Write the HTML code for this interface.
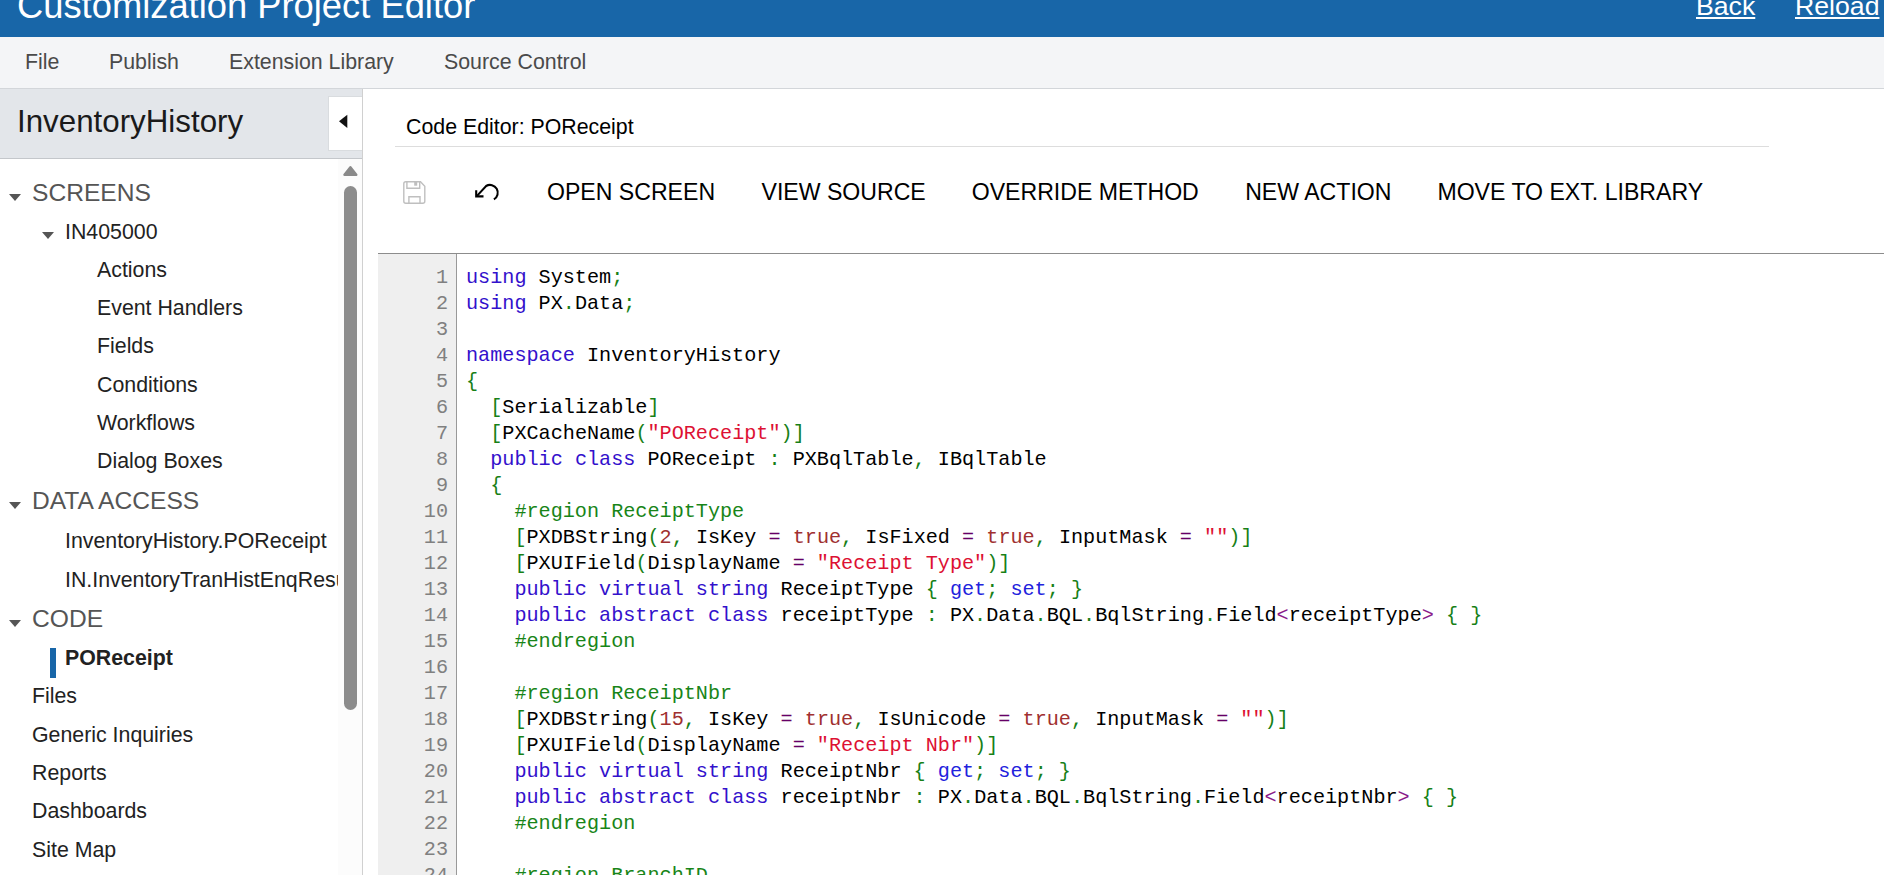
<!DOCTYPE html>
<html><head><meta charset="utf-8">
<style>
html,body{margin:0;padding:0;width:1884px;height:875px;overflow:hidden;background:#fff;font-family:"Liberation Sans",sans-serif;}
.a{position:absolute;white-space:nowrap;line-height:1;}
#hdr{position:absolute;left:0;top:0;width:1884px;height:37px;background:#1866a8;overflow:hidden;}
#menu{position:absolute;left:0;top:37px;width:1884px;height:51px;background:#f4f5f7;border-bottom:1px solid #d3d6da;}
#side{position:absolute;left:0;top:89px;width:362px;height:786px;background:#fff;border-right:1px solid #d0d0d0;overflow:hidden;}
#shead{position:absolute;left:0;top:0;width:362px;height:69px;background:#e3e6ea;border-bottom:1px solid #c4c7cb;}
#tree{position:absolute;left:0;top:0;width:338px;height:786px;overflow:hidden;}
.menu{font-size:21.33px;color:#4a4a4a;}
.grp{font-size:24.6px;color:#555;}
.it{font-size:21.33px;color:#222;}
.b{font-weight:bold;}
.tri{position:absolute;width:0;height:0;border-left:6px solid transparent;border-right:6px solid transparent;border-top:7px solid #555;}
.tb{font-size:23.1px;color:#000;}
#code{position:absolute;left:378px;top:253px;width:1506px;height:622px;border-top:1px solid #8c8c8c;overflow:hidden;}
#gut{position:absolute;left:0;top:0;width:78px;height:630px;background:#efefef;border-right:1px solid #999;}
.mono{font-family:"Liberation Mono",monospace;font-size:20.17px;line-height:26px;}
#nums{position:absolute;right:8px;top:10.5px;color:#808080;text-align:right;white-space:pre;}
pre{margin:0;position:absolute;left:88px;top:10.5px;color:#000;}
.k{color:#3311cc}.g{color:#2222dd}.p{color:#178017}.s{color:#dd1133}.n{color:#a03030}.o{color:#660066}.r{color:#188518}.t{color:#8a1a8a}
</style></head><body>
<div id="hdr">
  <div class="a" style="left:17px;top:-11.77px;font-size:36.35px;color:#fff;">Customization Project Editor</div>
  <div class="a" style="left:1696px;top:-7.38px;font-size:26.67px;color:#fff;text-decoration:underline;text-decoration-thickness:2.4px;text-underline-offset:2.2px;">Back</div>
  <div class="a" style="left:1795px;top:-7.38px;font-size:26.67px;color:#fff;text-decoration:underline;text-decoration-thickness:2.4px;text-underline-offset:2.2px;">Reload</div>
</div>
<div id="menu">
  <div class="a menu" style="left:25px;top:14.64px;">File</div>
  <div class="a menu" style="left:109px;top:14.64px;">Publish</div>
  <div class="a menu" style="left:229px;top:14.64px;">Extension Library</div>
  <div class="a menu" style="left:444px;top:14.64px;">Source Control</div>
</div>
<div id="side">
  <div id="shead">
    <div class="a" style="left:17px;top:16.80px;font-size:31.3px;color:#1a1a1a;">InventoryHistory</div>
    <div style="position:absolute;left:328px;top:7px;width:34px;height:55px;background:#fff;box-sizing:border-box;border:1px solid #d9dcdf;border-right:none;"></div>
  </div>
  <div style="position:absolute;left:338px;top:70px;width:24px;height:716px;background:#fcfcfc;"></div>
  <div id="tree">
  <div class="a grp" style="left:32px;top:91.98px;">SCREENS</div>
  <div class="tri" style="left:8.5px;top:105.00px;"></div>
  <div class="a it" style="left:65px;top:132.74px;">IN405000</div>
  <div class="tri" style="left:41.5px;top:143.00px;"></div>
  <div class="a it" style="left:97px;top:170.74px;">Actions</div>
  <div class="a it" style="left:97px;top:209.04px;">Event Handlers</div>
  <div class="a it" style="left:97px;top:247.34px;">Fields</div>
  <div class="a it" style="left:97px;top:285.74px;">Conditions</div>
  <div class="a it" style="left:97px;top:324.04px;">Workflows</div>
  <div class="a it" style="left:97px;top:362.34px;">Dialog Boxes</div>
  <div class="a grp" style="left:32px;top:400.28px;">DATA ACCESS</div>
  <div class="tri" style="left:8.5px;top:413.30px;"></div>
  <div class="a it" style="left:65px;top:442.34px;">InventoryHistory.POReceipt</div>
  <div class="a it" style="left:65px;top:480.74px;">IN.InventoryTranHistEnqResult</div>
  <div class="a grp" style="left:32px;top:517.98px;">CODE</div>
  <div class="tri" style="left:8.5px;top:531.00px;"></div>
  <div class="a it b" style="left:65px;top:559.04px;">POReceipt</div>
  <div class="a it" style="left:32px;top:597.34px;">Files</div>
  <div class="a it" style="left:32px;top:635.74px;">Generic Inquiries</div>
  <div class="a it" style="left:32px;top:674.04px;">Reports</div>
  <div class="a it" style="left:32px;top:712.34px;">Dashboards</div>
  <div class="a it" style="left:32px;top:750.74px;">Site Map</div>
  </div>
</div>
<div class="a" style="left:406px;top:117.24px;font-size:21.33px;color:#000;">Code Editor: POReceipt</div>
<div style="position:absolute;left:395px;top:146px;width:1374px;height:1px;background:#dddddd;"></div>
  <div class="a tb" style="left:547px;top:181.15px;">OPEN SCREEN</div>
  <div class="a tb" style="left:761.5px;top:181.15px;">VIEW SOURCE</div>
  <div class="a tb" style="left:971.7px;top:181.15px;">OVERRIDE METHOD</div>
  <div class="a tb" style="left:1245.2px;top:181.15px;">NEW ACTION</div>
  <div class="a tb" style="left:1437.4px;top:181.15px;">MOVE TO EXT. LIBRARY</div>
<div id="code">
  <div id="gut"><div id="nums" class="mono">1
2
3
4
5
6
7
8
9
10
11
12
13
14
15
16
17
18
19
20
21
22
23
24</div></div>
  <pre class="mono"><span class="k">using</span> System<span class="p">;</span>
<span class="k">using</span> PX<span class="p">.</span>Data<span class="p">;</span>

<span class="k">namespace</span> InventoryHistory
<span class="p">{</span>
  <span class="p">[</span>Serializable<span class="p">]</span>
  <span class="p">[</span>PXCacheName<span class="p">(</span><span class="s">&quot;POReceipt&quot;</span><span class="p">)</span><span class="p">]</span>
  <span class="k">public</span> <span class="k">class</span> POReceipt <span class="p">:</span> PXBqlTable<span class="p">,</span> IBqlTable
  <span class="p">{</span>
    <span class="r">#region ReceiptType</span>
    <span class="p">[</span>PXDBString<span class="p">(</span><span class="n">2</span><span class="p">,</span> IsKey <span class="o">=</span> <span class="n">true</span><span class="p">,</span> IsFixed <span class="o">=</span> <span class="n">true</span><span class="p">,</span> InputMask <span class="o">=</span> <span class="s">&quot;&quot;</span><span class="p">)</span><span class="p">]</span>
    <span class="p">[</span>PXUIField<span class="p">(</span>DisplayName <span class="o">=</span> <span class="s">&quot;Receipt Type&quot;</span><span class="p">)</span><span class="p">]</span>
    <span class="k">public</span> <span class="k">virtual</span> <span class="k">string</span> ReceiptType <span class="p">{</span> <span class="g">get</span><span class="p">;</span> <span class="g">set</span><span class="p">;</span> <span class="p">}</span>
    <span class="k">public</span> <span class="k">abstract</span> <span class="k">class</span> receiptType <span class="p">:</span> PX<span class="p">.</span>Data<span class="p">.</span>BQL<span class="p">.</span>BqlString<span class="p">.</span>Field<span class="t">&lt;</span>receiptType<span class="t">&gt;</span> <span class="p">{</span> <span class="p">}</span>
    <span class="r">#endregion</span>

    <span class="r">#region ReceiptNbr</span>
    <span class="p">[</span>PXDBString<span class="p">(</span><span class="n">15</span><span class="p">,</span> IsKey <span class="o">=</span> <span class="n">true</span><span class="p">,</span> IsUnicode <span class="o">=</span> <span class="n">true</span><span class="p">,</span> InputMask <span class="o">=</span> <span class="s">&quot;&quot;</span><span class="p">)</span><span class="p">]</span>
    <span class="p">[</span>PXUIField<span class="p">(</span>DisplayName <span class="o">=</span> <span class="s">&quot;Receipt Nbr&quot;</span><span class="p">)</span><span class="p">]</span>
    <span class="k">public</span> <span class="k">virtual</span> <span class="k">string</span> ReceiptNbr <span class="p">{</span> <span class="g">get</span><span class="p">;</span> <span class="g">set</span><span class="p">;</span> <span class="p">}</span>
    <span class="k">public</span> <span class="k">abstract</span> <span class="k">class</span> receiptNbr <span class="p">:</span> PX<span class="p">.</span>Data<span class="p">.</span>BQL<span class="p">.</span>BqlString<span class="p">.</span>Field<span class="t">&lt;</span>receiptNbr<span class="t">&gt;</span> <span class="p">{</span> <span class="p">}</span>
    <span class="r">#endregion</span>

    <span class="r">#region BranchID</span></pre>
</div>
<svg style="position:absolute;left:0;top:0" width="1884" height="875" viewBox="0 0 1884 875">
  <path d="M339 121.3 L347.3 114.7 L347.3 127.9 Z" fill="#111"/>
  <path d="M350.4 167.3 L356.3 174.8 L344.5 174.8 Z" fill="#8a8a8a" stroke="#8a8a8a" stroke-width="2.4" stroke-linejoin="round"/>
  <rect x="344" y="186" width="13" height="524" rx="6.5" fill="#8c8c8c"/>
  <rect x="50" y="648" width="6" height="30" fill="#1866a8"/>
  <g fill="none" stroke="#bfbfbf" stroke-width="1.4">
    <path d="M405.8 181.8 H420.5 L424.8 186.2 V201.2 a2 2 0 0 1 -2 2 H405.8 a2 2 0 0 1 -2 -2 V183.8 a2 2 0 0 1 2 -2 Z"/>
    <path d="M406.9 181.8 V188.2 H419.7 V181.8"/>
    <path d="M408.9 203.2 V196.8 H420 V203.2"/>
  </g>
  <rect x="414.2" y="181.5" width="3" height="4.2" fill="#bfbfbf"/>
  <g fill="none" stroke="#000" stroke-width="2.1" stroke-linecap="butt">
    <path d="M493.9 199.4 A7.6 7.6 0 1 0 486.1 186.0 L477 195.9"/>
    <path d="M476.2 190.2 V196.4 H483.5"/>
  </g>
</svg>
</body></html>
